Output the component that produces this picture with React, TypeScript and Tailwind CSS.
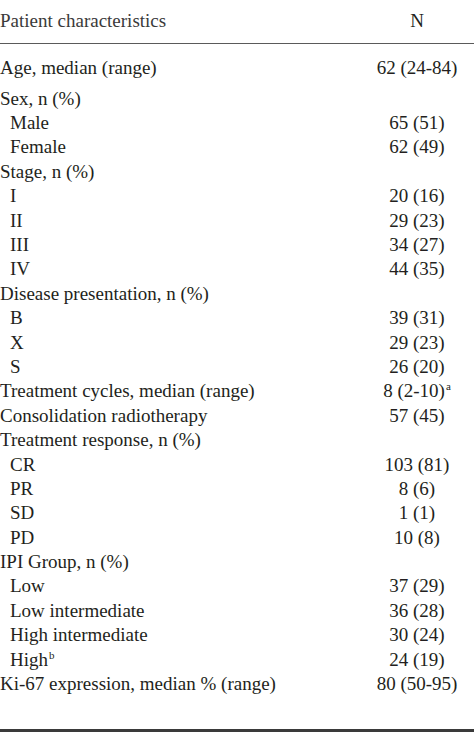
import React from 'react'

type Row = { label: React.ReactNode; value?: React.ReactNode; indent?: boolean }

const Sup = ({ children }: { children: React.ReactNode }) => (
  <sup className="text-[11px] -top-[7px] ml-[1px]">{children}</sup>
)

const ROWS: Row[] = [
  { label: 'Sex, n (%)' },
  { label: 'Male', value: '65 (51)', indent: true },
  { label: 'Female', value: '62 (49)', indent: true },
  { label: 'Stage, n (%)' },
  { label: 'I', value: '20 (16)', indent: true },
  { label: 'II', value: '29 (23)', indent: true },
  { label: 'III', value: '34 (27)', indent: true },
  { label: 'IV', value: '44 (35)', indent: true },
  { label: 'Disease presentation, n (%)' },
  { label: 'B', value: '39 (31)', indent: true },
  { label: 'X', value: '29 (23)', indent: true },
  { label: 'S', value: '26 (20)', indent: true },
  { label: 'Treatment cycles, median (range)', value: <>8 (2-10)<Sup>a</Sup></> },
  { label: 'Consolidation radiotherapy', value: '57 (45)' },
  { label: 'Treatment response, n (%)' },
  { label: 'CR', value: '103 (81)', indent: true },
  { label: 'PR', value: '8 (6)', indent: true },
  { label: 'SD', value: '1 (1)', indent: true },
  { label: 'PD', value: '10 (8)', indent: true },
  { label: 'IPI Group, n (%)' },
  { label: 'Low', value: '37 (29)', indent: true },
  { label: 'Low intermediate', value: '36 (28)', indent: true },
  { label: 'High intermediate', value: '30 (24)', indent: true },
  { label: <>High<Sup>b</Sup></>, value: '24 (19)', indent: true },
  { label: 'Ki-67 expression, median % (range)', value: '80 (50-95)' },
]

function TableRow({ label, value, indent }: Row) {
  return (
    <div className="grid grid-cols-[362px_110px] h-[24.4px] items-center">
      <div className={indent ? 'pl-[10px]' : ''}>{label}</div>
      <div className="text-center">{value}</div>
    </div>
  )
}

export default function App() {
  return (
    <div
      className="w-[474px] h-[732px] bg-white text-[#231f20] text-[19px] leading-none overflow-hidden"
      style={{ fontFamily: '"Liberation Serif", "Times New Roman", serif' }}
    >
      <div className="grid grid-cols-[362px_110px] h-[44px] items-center pb-[3px] border-b border-[#5a5a5a]">
        <div className="text-[#3a3a3a]">Patient characteristics</div>
        <div className="text-center">N</div>
      </div>
      <div className="pt-[11px] mb-[6.6px]">
        <TableRow label="Age, median (range)" value="62 (24-84)" />
      </div>
      {ROWS.map((r, i) => (
        <TableRow key={i} {...r} />
      ))}
      <div className="h-[36px] border-b-[3px] border-[#3a3a3a]" />
    </div>
  )
}
